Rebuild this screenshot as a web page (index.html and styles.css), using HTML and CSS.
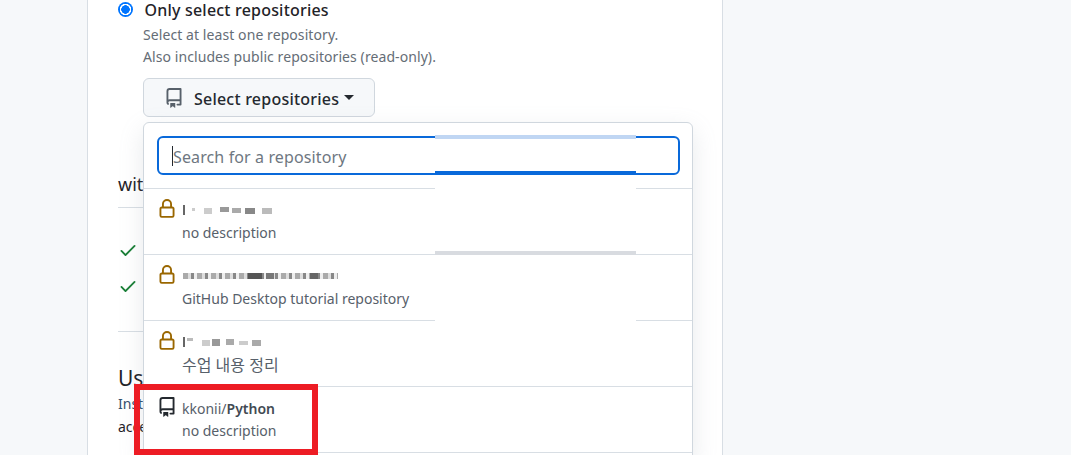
FILE: index.html
```html
<!DOCTYPE html>
<html lang="en">

<head>
    <meta charset="UTF-8">
    <title>Repository access</title>
    <link rel="stylesheet" href="styles.css">
</head>

<body>
    <main class="card">
        <div class="option">
            <span class="radio"></span>
            <div class="option-body">
                <div class="option-title">Only select repositories</div>
                <p class="note">Select at least one repository.</p>
                <p class="note">Also includes public repositories (read-only).</p>
                <button class="select-btn">
                    <svg class="icon" width="20" height="20" viewBox="0 0 16 16"><path fill-rule="evenodd" d="M2 2.5A2.5 2.5 0 0 1 4.5 0h8.75a.75.75 0 0 1 .75.75v12.5a.75.75 0 0 1-.75.75h-2.5a.75.75 0 0 1 0-1.5h1.75v-2h-8a1 1 0 0 0-.714 1.7.75.75 0 1 1-1.072 1.05A2.5 2.5 0 0 1 2 11.5Zm10.5-1h-8a1 1 0 0 0-1 1v6.708A2.5 2.5 0 0 1 4.5 9h8ZM5 12.25a.25.25 0 0 1 .25-.25h3.5a.25.25 0 0 1 .25.25v3.25a.25.25 0 0 1-.4.2l-1.45-1.087a.25.25 0 0 0-.3 0L5.4 15.7a.25.25 0 0 1-.4-.2Z"></path></svg>
                    <span class="select-label">Select repositories</span>
                    <span class="caret"></span>
                </button>
            </div>
        </div>

        <div class="perm-title">with</div>
        <div class="perm-list">
            <div class="perm-row"><svg class="check" width="20" height="20" viewBox="0 0 16 16"><path d="M13.78 4.22a.75.75 0 0 1 0 1.06l-7.25 7.25a.75.75 0 0 1-1.06 0L2.22 9.28a.75.75 0 0 1 1.06-1.06L6 10.94l6.72-6.72a.75.75 0 0 1 1.06 0Z"></path></svg></div>
            <div class="perm-row"><svg class="check" width="20" height="20" viewBox="0 0 16 16"><path d="M13.78 4.22a.75.75 0 0 1 0 1.06l-7.25 7.25a.75.75 0 0 1-1.06 0L2.22 9.28a.75.75 0 0 1 1.06-1.06L6 10.94l6.72-6.72a.75.75 0 0 1 1.06 0Z"></path></svg></div>
        </div>

        <div class="user-block">
            <div class="user-title">User</div>
            <p class="user-text"><span class="link">Install</span></p>
            <p class="user-text">access</p>
        </div>
    </main>

    <div class="menu">
        <div class="search-wrap">
            <div class="search"><span class="cursor"></span>Search for a repository</div>
        </div>
        <div class="repo">
            <svg class="lock" width="20" height="20" viewBox="0 0 16 16"><path d="M4 4a4 4 0 0 1 8 0v2h.25c.966 0 1.75.784 1.75 1.75v5.5A1.75 1.75 0 0 1 12.25 15h-8.5A1.75 1.75 0 0 1 2 13.25v-5.5C2 6.784 2.784 6 3.75 6H4Zm8.25 3.5h-8.5a.25.25 0 0 0-.25.25v5.5c0 .138.112.25.25.25h8.5a.25.25 0 0 0 .25-.25v-5.5a.25.25 0 0 0-.25-.25ZM10.5 6V4a2.5 2.5 0 1 0-5 0v2Z"></path></svg>
            <div class="repo-text">
                <div class="smudge smudge-a"></div>
                <div class="desc">no description</div>
            </div>
        </div>
        <div class="repo">
            <svg class="lock" width="20" height="20" viewBox="0 0 16 16"><path d="M4 4a4 4 0 0 1 8 0v2h.25c.966 0 1.75.784 1.75 1.75v5.5A1.75 1.75 0 0 1 12.25 15h-8.5A1.75 1.75 0 0 1 2 13.25v-5.5C2 6.784 2.784 6 3.75 6H4Zm8.25 3.5h-8.5a.25.25 0 0 0-.25.25v5.5c0 .138.112.25.25.25h8.5a.25.25 0 0 0 .25-.25v-5.5a.25.25 0 0 0-.25-.25ZM10.5 6V4a2.5 2.5 0 1 0-5 0v2Z"></path></svg>
            <div class="repo-text">
                <div class="smudge smudge-b"></div>
                <div class="desc">GitHub Desktop tutorial repository</div>
            </div>
        </div>
        <div class="repo">
            <svg class="lock" width="20" height="20" viewBox="0 0 16 16"><path d="M4 4a4 4 0 0 1 8 0v2h.25c.966 0 1.75.784 1.75 1.75v5.5A1.75 1.75 0 0 1 12.25 15h-8.5A1.75 1.75 0 0 1 2 13.25v-5.5C2 6.784 2.784 6 3.75 6H4Zm8.25 3.5h-8.5a.25.25 0 0 0-.25.25v5.5c0 .138.112.25.25.25h8.5a.25.25 0 0 0 .25-.25v-5.5a.25.25 0 0 0-.25-.25ZM10.5 6V4a2.5 2.5 0 1 0-5 0v2Z"></path></svg>
            <div class="repo-text">
                <div class="smudge smudge-c"></div>
                <div class="desc desc-ko">수업 내용 정리</div>
            </div>
        </div>
        <div class="repo">
            <svg class="book" width="20" height="20" viewBox="0 0 16 16"><path fill-rule="evenodd" d="M2 2.5A2.5 2.5 0 0 1 4.5 0h8.75a.75.75 0 0 1 .75.75v12.5a.75.75 0 0 1-.75.75h-2.5a.75.75 0 0 1 0-1.5h1.75v-2h-8a1 1 0 0 0-.714 1.7.75.75 0 1 1-1.072 1.05A2.5 2.5 0 0 1 2 11.5Zm10.5-1h-8a1 1 0 0 0-1 1v6.708A2.5 2.5 0 0 1 4.5 9h8ZM5 12.25a.25.25 0 0 1 .25-.25h3.5a.25.25 0 0 1 .25.25v3.25a.25.25 0 0 1-.4.2l-1.45-1.087a.25.25 0 0 0-.3 0L5.4 15.7a.25.25 0 0 1-.4-.2Z"></path></svg>
            <div class="repo-text">
                <div class="repo-name">kkonii/<b>Python</b></div>
                <div class="desc">no description</div>
            </div>
        </div>
    </div>

    <!-- painted-over strip in the screenshot -->
    <div class="patch">
        <div class="patch-top"></div>
        <div class="patch-blue"></div>
        <div class="patch-grey"></div>
    </div>

    <div class="red-box"></div>
</body>

</html>
```

FILE: styles.css
```css
* {
    box-sizing: border-box;
}

html,
body {
    height: 455px;
    overflow: hidden;
}

body {
    margin: 0;
    background-color: #f6f8fa;
    font-family: "Noto Sans", "Noto Sans CJK KR", sans-serif;
    color: #1f2328;
}

p {
    margin: 0;
}

.card {
    width: 636px;
    height: 455px;
    margin-left: 87px;
    padding: 0 30px;
    background-color: #fff;
    border-left: 1px solid #d8dee4;
    border-right: 1px solid #d8dee4;
}

.option {
    display: flex;
    gap: 10px;
}

.radio {
    flex: none;
    width: 15px;
    height: 15px;
    margin-top: 2px;
    border-radius: 50%;
    background: radial-gradient(circle, #0075ff 0 4px, #fff 4.5px 5.5px, #0075ff 6px);
}

.option-title {
    margin-left: 1.5px;
    margin-bottom: 4px;
    font-size: 16px;
    font-weight: 500;
    line-height: 20px;
    letter-spacing: 0.2px;
}

.note {
    font-size: 14px;
    line-height: 22px;
    letter-spacing: 0.08px;
    color: #656d76;
}

.select-btn {
    display: flex;
    align-items: center;
    width: 232px;
    height: 39px;
    margin-top: 10px;
    padding: 0 0 0 20px;
    background-color: #f6f8fa;
    border: 1px solid #d0d7de;
    border-radius: 6px;
    font: 500 16px "Noto Sans", sans-serif;
    letter-spacing: 0.22px;
    color: #24292f;
}

.select-label {
    padding-top: 2px;
}

.icon {
    fill: #57606a;
    margin-right: 10px;
}

.caret {
    width: 0;
    height: 0;
    margin-left: 5px;
    border-top: 5px solid #24292f;
    border-left: 5px solid transparent;
    border-right: 5px solid transparent;
}

.perm-title {
    margin-top: 56px;
    padding-bottom: 12px;
    font-size: 18px;
    line-height: 22px;
    border-bottom: 1px solid #d8dee4;
}

.perm-list {
    padding-top: 32px;
}

.perm-row {
    height: 36px;
}

.check {
    fill: #1a7f37;
}

.user-block {
    margin-top: 19px;
    padding-top: 33px;
    border-top: 1px solid #d8dee4;
}

.user-title {
    font-size: 21px;
    line-height: 26px;
    margin-bottom: 1px;
}

.user-text {
    font-size: 14px;
    line-height: 23px;
}

.link {
    color: #32506e;
}

.menu {
    position: absolute;
    top: 122px;
    left: 143px;
    width: 550px;
    height: 340px;
    background-color: #fff;
    border: 1px solid #d0d7de;
    border-radius: 6px;
    box-shadow: 0 8px 24px rgba(140, 149, 159, 0.2);
}

.search-wrap {
    height: 66px;
    padding: 13px 12px 0 13px;
    border-bottom: 1px solid #d8dee4;
}

.search {
    position: relative;
    height: 39px;
    padding-left: 14px;
    border: 2px solid #0969da;
    border-radius: 6px;
    font-size: 16px;
    line-height: 38px;
    letter-spacing: 0.12px;
    color: #6e7781;
}

.cursor {
    position: absolute;
    left: 13px;
    top: 8px;
    width: 1px;
    height: 20px;
    background-color: #24292f;
}

.repo {
    display: flex;
    gap: 5px;
    height: 66px;
    padding: 10px 0 0 13px;
    border-bottom: 1px solid #d8dee4;
}

.repo-text {
    margin-top: 1px;
}

.lock {
    flex: none;
    fill: #9a6700;
}

.book {
    flex: none;
    fill: #24292f;
}

.smudge {
    height: 10px;
    margin: 5px 0 7px;
    filter: blur(0.6px);
    background-repeat: no-repeat;
}

.smudge-a {
    width: 90px;
    background-image:
        linear-gradient(#666, #666),
        linear-gradient(#ccc, #ccc),
        linear-gradient(#ccc, #ccc),
        linear-gradient(#999, #999),
        linear-gradient(#aaa, #aaa),
        linear-gradient(#888, #888),
        linear-gradient(#bbb, #bbb);
    background-size: 2px 10px, 3px 3px, 8px 6px, 9px 5px, 9px 5px, 10px 6px, 10px 6px;
    background-position: 1px 0, 10px 3px, 22px 3px, 38px 2px, 50px 3px, 63px 3px, 80px 3px;
}

.smudge-b {
    width: 156px;
    background-image:
        linear-gradient(#555, #555),
        linear-gradient(#777, #777),
        linear-gradient(#666, #666),
        repeating-linear-gradient(90deg, #aaa 0 5px, #ddd 5px 8px, #888 8px 11px, #eee 11px 14px);
    background-size: 14px 6px, 8px 6px, 8px 6px, 155px 6px;
    background-position: 66px 2px, 84px 2px, 128px 2px, 1px 2px;
}

.smudge-c {
    width: 80px;
    background-image:
        linear-gradient(#666, #666),
        linear-gradient(#bbb, #bbb),
        linear-gradient(#ccc, #ccc),
        linear-gradient(#999, #999),
        linear-gradient(#aaa, #aaa),
        linear-gradient(#ccc, #ccc),
        linear-gradient(#aaa, #aaa);
    background-size: 2px 10px, 6px 3px, 8px 6px, 8px 7px, 8px 6px, 9px 4px, 9px 6px;
    background-position: 1px 0, 5px 1px, 20px 3px, 30px 2px, 44px 2px, 57px 4px, 70px 3px;
}

.repo-name {
    font-size: 14px;
    line-height: 22px;
    color: #57606a;
}

.repo-name b {
    font-weight: 600;
    color: #424a53;
}

.desc {
    font-size: 14px;
    line-height: 22px;
    color: #57606a;
}

.desc-ko {
    font-size: 16px;
}

.patch {
    position: absolute;
    top: 135px;
    left: 435px;
    width: 201px;
    height: 187px;
    background-color: #fff;
}

.patch-top {
    height: 4px;
    background-color: #c0d6f3;
}

.patch-blue {
    height: 4px;
    margin-top: 32px;
    background-color: #0969da;
}

.patch-grey {
    height: 4px;
    margin-top: 76px;
    background-color: #d8dbe0;
}

.red-box {
    position: absolute;
    top: 384px;
    left: 134px;
    width: 184px;
    height: 71px;
    border: 6px solid #ed1c24;
}
```
